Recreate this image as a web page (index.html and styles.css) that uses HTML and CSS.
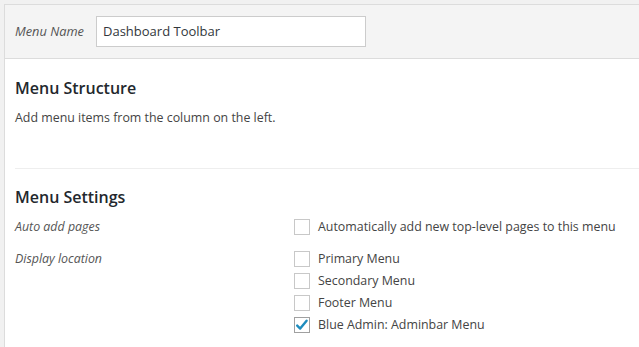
FILE: index.html
```html
<!DOCTYPE html>
<html>
<head>
<meta charset="utf-8">
<link rel="stylesheet" href="styles.css">
</head>
<body>
<div class="wrap">
  <div class="menu-edit">
    <div class="header">
      <label class="name-label" for="menu-name">Menu Name</label>
      <input id="menu-name" class="name-input" type="text" value="Dashboard Toolbar">
    </div>
    <div class="body">
      <h3 class="heading">Menu Structure</h3>
      <p class="desc">Add menu items from the column on the left.</p>
      <div class="divider"></div>
      <h3 class="heading settings-heading">Menu Settings</h3>
      <div class="setting-row">
        <div class="setting-label">Auto add pages</div>
        <div class="setting-options">
          <div class="opt"><span class="cb"></span><span>Automatically add new top-level pages to this menu</span></div>
        </div>
      </div>
      <div class="setting-row second">
        <div class="setting-label">Display location</div>
        <div class="setting-options">
          <div class="opt"><span class="cb"></span><span>Primary Menu</span></div>
          <div class="opt"><span class="cb"></span><span>Secondary Menu</span></div>
          <div class="opt"><span class="cb"></span><span>Footer Menu</span></div>
          <div class="opt"><span class="cb checked"><svg viewBox="0 0 16 16" width="16" height="16"><path d="M3.2 8.6 L6.2 11.6 L12.6 3.8" fill="none" stroke="#1e8cbe" stroke-width="2.4" stroke-linecap="round" stroke-linejoin="round"/></svg></span><span>Blue Admin: Adminbar Menu</span></div>
        </div>
      </div>
    </div>
  </div>
</div>
</body>
</html>
```
FILE: styles.css
```css
html, body {
  margin: 0;
  padding: 0;
  background: #f1f1f1;
  overflow: hidden;
}
.wrap {
  padding: 4px 0 0 4px;
  width: 635px;
  height: 343px;
  overflow: hidden;
  font-family: "Open Sans", "Noto Sans", sans-serif;
  font-size: 12.4px;
  color: #444;
}
.menu-edit {
  border-top: 1px solid #dcdcdc;
  border-left: 1px solid #dcdcdc;
  background: #fff;
  height: 100%;
}
.header {
  background: #f4f4f4;
  border-bottom: 1px solid #dcdcdc;
  display: flex;
  align-items: center;
  padding: 0 10px;
  box-sizing: border-box;
  height: 54px;
}
.name-label {
  font-style: italic;
  color: #555;
  width: 81px;
  font-size: 12.8px;
  padding-bottom: 2px;
}
.name-input {
  width: 270px;
  height: 31px;
  box-sizing: border-box;
  border: 1px solid #ccc;
  background: #fff;
  font-family: inherit;
  font-size: 13px;
  color: #32373c;
  padding: 0 6px;
  margin: 0 0 1px 0;
  outline: none;
}
.body {
  padding: 0 0 0 10px;
}
.heading {
  margin: 0;
  font-size: 16px;
  font-weight: 600;
  color: #23282d;
  padding-top: 18px;
  line-height: 22px;
}
.desc {
  margin: 9px 0 0 0;
  line-height: 20px;
}
.divider {
  border-top: 1px solid #eee;
  margin-top: 40px;
}
.settings-heading {
  padding-top: 17px;
}
.setting-row {
  display: flex;
  margin-top: 10px;
}
.setting-row.second {
  margin-top: 14px;
}
.setting-label {
  width: 279px;
  font-style: italic;
  color: #555;
  line-height: 18px;
}
.setting-options {
  display: flex;
  flex-direction: column;
  gap: 4px;
}
.opt {
  display: flex;
  align-items: center;
  gap: 8px;
  line-height: 18px;
  color: #444;
}
.cb {
  width: 16px;
  height: 16px;
  box-sizing: border-box;
  border: 1px solid #c8c8c8;
  background: #fff;
  display: inline-flex;
  flex: none;
  position: relative;
}
.cb.checked {
  border-color: #a0a0a0;
}
.cb svg {
  display: block;
  position: absolute;
  left: -1px;
  top: -1px;
}
```
